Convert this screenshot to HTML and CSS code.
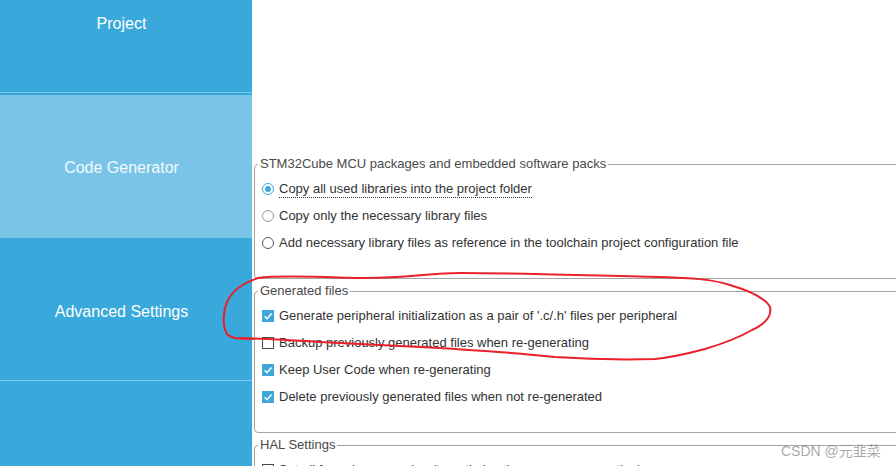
FILE: index.html
```html
<!DOCTYPE html>
<html lang="en">
<head>
<meta charset="utf-8">
<title>Code Generator</title>
<link rel="stylesheet" href="styles.css">
</head>
<body>
<div class="app">
  <aside class="sidebar">
    <nav class="nav">
      <div class="nav-item nav-first">Project</div>
      <div class="nav-item nav-active">Code Generator</div>
      <div class="nav-item nav-sep">Advanced Settings</div>
      <div class="nav-item nav-last"></div>
    </nav>
  </aside>
  <main class="content">
    <fieldset class="group">
      <legend>STM32Cube MCU packages and embedded software packs</legend>
      <label class="opt"><span class="radio checked"></span><span class="lbl focus">Copy all used libraries into the project folder</span></label>
      <label class="opt"><span class="radio light"></span><span class="lbl">Copy only the necessary library files</span></label>
      <label class="opt"><span class="radio"></span><span class="lbl">Add necessary library files as reference in the toolchain project configuration file</span></label>
    </fieldset>
    <fieldset class="group">
      <legend>Generated files</legend>
      <label class="opt"><span class="check checked"><svg viewBox="0 0 12 12" width="12" height="12"><path d="M2.6 6.3 L5 8.7 L9.6 3.6" fill="none" stroke="#fff" stroke-width="1.5"/></svg></span><span class="lbl">Generate peripheral initialization as a pair of '.c/.h' files per peripheral</span></label>
      <label class="opt"><span class="check"></span><span class="lbl">Backup previously generated files when re-generating</span></label>
      <label class="opt"><span class="check checked"><svg viewBox="0 0 12 12" width="12" height="12"><path d="M2.6 6.3 L5 8.7 L9.6 3.6" fill="none" stroke="#fff" stroke-width="1.5"/></svg></span><span class="lbl">Keep User Code when re-generating</span></label>
      <label class="opt"><span class="check checked"><svg viewBox="0 0 12 12" width="12" height="12"><path d="M2.6 6.3 L5 8.7 L9.6 3.6" fill="none" stroke="#fff" stroke-width="1.5"/></svg></span><span class="lbl">Delete previously generated files when not re-generated</span></label>
    </fieldset>
    <fieldset class="group">
      <legend>HAL Settings</legend>
      <label class="opt"><span class="check"></span><span class="lbl">Set all free pins as analog (to optimize the power consumption)</span></label>
    </fieldset>
  </main>
  <svg class="annot" width="896" height="466" viewBox="0 0 896 466">
    <path d="M253 339 C240 339 232 339 227 334 C222 326 223 310 228 300 C233 290 243 283 258 278 C280 275 320 277 360 278 C400 279 430 273 460 273 C520 273 600 276 660 277 C690 278 712 279 730 285 C750 291 766 299 770 307 C772 316 765 324 752 330 C740 337 725 343 705 349 C690 353 675 357 655 359 C620 360 585 359 555 357 C510 352 470 350 440 348 C400 346 360 344 320 342 C290 340 265 339 240 338" fill="none" stroke="#e8212b" stroke-width="2" stroke-linecap="round" stroke-linejoin="round"/>
  </svg>
  <div class="watermark">CSDN @元韭菜</div>
</div>
</body>
</html>
```

FILE: styles.css
```css
html, body {
  margin: 0;
  padding: 0;
  background: #ffffff;
  overflow: hidden;
}

body {
  font-family: "Liberation Sans", Arial, "Noto Sans CJK SC", sans-serif;
}

.app {
  position: relative;
  display: flex;
  width: 896px;
  height: 466px;
  overflow: hidden;
  background: #ffffff;
}

/* ---------- sidebar ---------- */
.sidebar {
  flex: none;
  width: 252px;
  height: 466px;
  overflow: hidden;
  background: #39a8db;
}

.nav {
  display: flex;
  flex-direction: column;
}

.nav-item {
  box-sizing: border-box;
  display: flex;
  align-items: center;
  justify-content: center;
  padding-right: 9px;
  color: #ffffff;
  font-size: 16px;
  line-height: 18px;
  flex: none;
}

.nav-first {
  margin-top: -48px;
  height: 141px;
  padding-top: 4px;
  border-bottom: 1px solid #7cc6ea;
  margin-bottom: 2px;
}

.nav-active {
  height: 143px;
  padding-top: 2px;
  background: #7ac4e8;
  color: #f4fafd;
}

.nav-sep {
  height: 143px;
  padding-top: 5px;
  border-bottom: 1px solid #7cc6ea;
}

.nav-last {
  height: 120px;
}

/* ---------- content ---------- */
.content {
  flex: 1;
  min-width: 0;
  overflow: hidden;
  padding: 157px 0 0 2px;
}

.group {
  box-sizing: border-box;
  width: 720px;
  margin: 0 0 5px 0;
  padding: 4px 0 22px 0;
  border: 1px solid #a3a3a3;
  border-radius: 4px;
}

.group legend {
  margin-left: 3px;
  padding: 0 2px;
  font-size: 13px;
  line-height: 14px;
  color: #4a4a4a;
}

.opt {
  display: flex;
  align-items: center;
  height: 27px;
  padding-left: 7px;
  font-size: 13px;
  color: #333333;
}

.lbl {
  margin-left: 5px;
  line-height: 15px;
  white-space: nowrap;
}

.lbl.focus {
  padding-bottom: 1px;
  border-bottom: 1px dotted #333333;
  margin-top: 2px;
}

.radio {
  box-sizing: border-box;
  position: relative;
  flex: none;
  width: 12px;
  height: 12px;
  border: 1px solid #5a5a5a;
  border-radius: 50%;
  background: #ffffff;
}

.radio.light {
  border-color: #9a9a9a;
}

.radio.checked {
  border-color: #39a8db;
}

.radio.checked::after {
  content: "";
  position: absolute;
  left: 2px;
  top: 2px;
  width: 6px;
  height: 6px;
  border-radius: 50%;
  background: #39a8db;
}

.check {
  box-sizing: border-box;
  flex: none;
  display: flex;
  width: 12px;
  height: 12px;
  border: 1px solid #4a4a4a;
  background: #ffffff;
}

.check.checked {
  border: none;
  background: #3ea6dc;
}

/* ---------- overlays ---------- */
.annot {
  position: absolute;
  left: 0;
  top: 0;
  pointer-events: none;
}

.watermark {
  position: absolute;
  left: 781px;
  top: 442px;
  font-size: 14px;
  line-height: 18px;
  color: rgba(140, 140, 140, 0.75);
  font-family: "Liberation Sans", Arial, "Noto Sans CJK SC", sans-serif;
}
```
